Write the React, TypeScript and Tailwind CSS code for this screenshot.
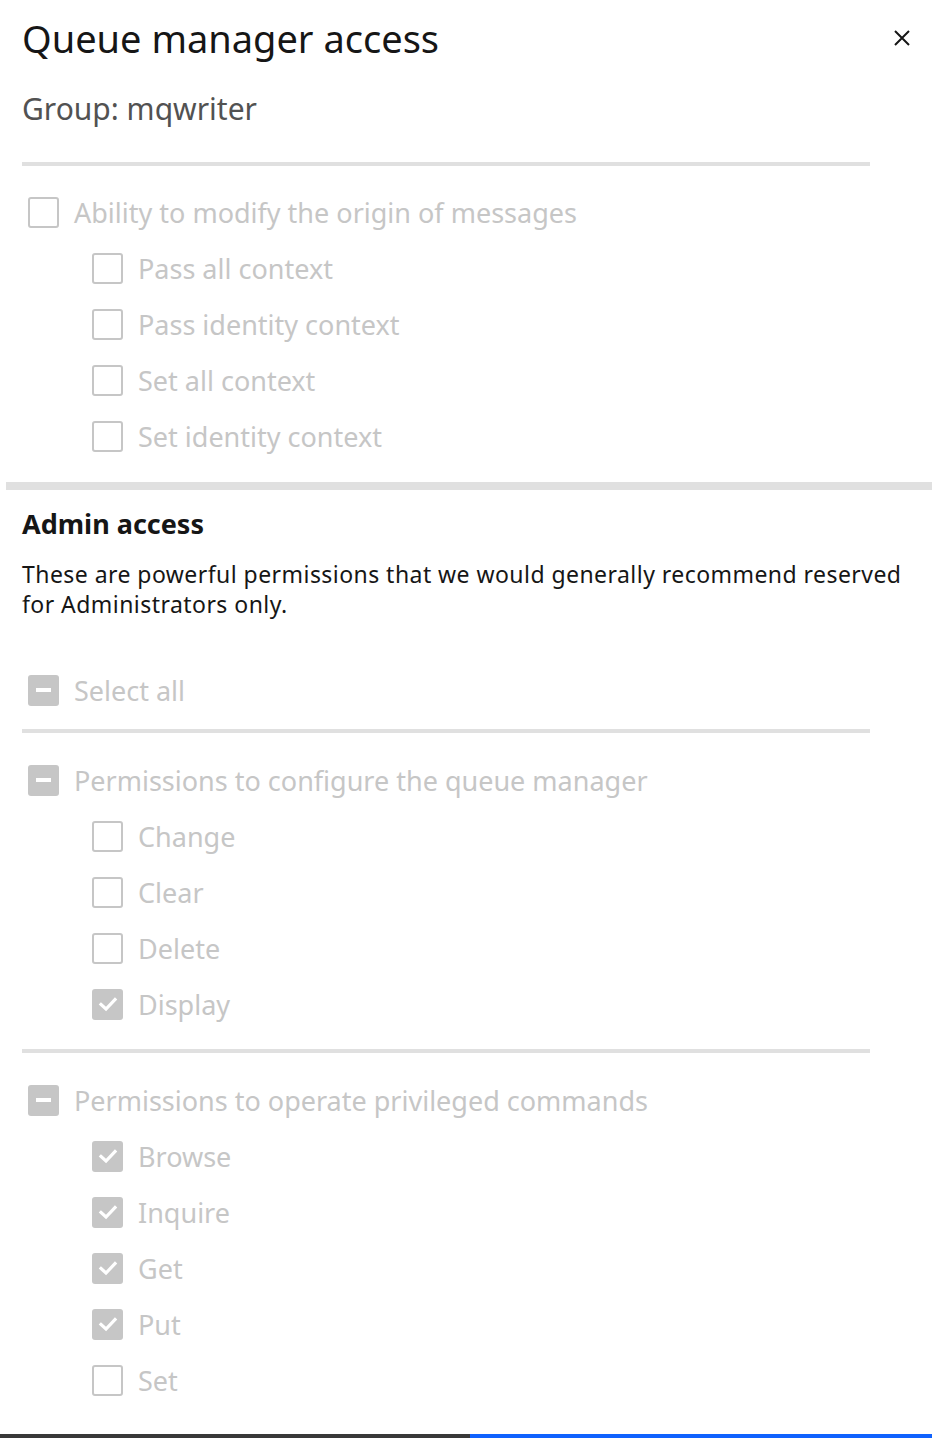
import React from "react";

type State = "off" | "on" | "mixed";

function Box({ state }: { state: State }) {
  if (state === "off") {
    return <div className="w-[31px] h-[31px] shrink-0 rounded-[3px] border-2 border-[#c6c6c6] bg-white" />;
  }
  return (
    <div className="w-[31px] h-[31px] shrink-0 rounded-[3px] bg-[#c6c6c6] flex items-center justify-center">
      {state === "on" ? (
        <svg width="24" height="24" viewBox="0 0 24 24" fill="none">
          <path d="M5 12.5 L10 17 L19 7.5" stroke="white" strokeWidth="3.2" strokeLinecap="square" />
        </svg>
      ) : (
        <div className="w-[15px] h-[4px] bg-white" />
      )}
    </div>
  );
}

function Row({ label, state, child }: { label: string; state: State; child?: boolean }) {
  return (
    <div className={`h-[56px] flex items-center gap-[15px] ${child ? "pl-[70px]" : "pl-[6px]"}`}>
      <Box state={state} />
      <span className="text-[27px] leading-none text-[#c6c6c6]">{label}</span>
    </div>
  );
}

function Divider() {
  return <div className="w-[848px] h-[4px] bg-[#e0e0e0]" />;
}

export default function App() {
  return (
    <div
      className="w-[932px] h-[1438px] bg-white relative flex flex-col overflow-hidden"
      style={{ fontFamily: '"Noto Sans", "Open Sans", Arial, sans-serif' }}
    >
      <button className="absolute left-[890px] top-[26px] w-[24px] h-[24px] flex items-center justify-center">
        <svg width="18" height="18" viewBox="0 0 18 18" fill="none">
          <path d="M2 2 L16 16 M16 2 L2 16" stroke="#161616" strokeWidth="2" />
        </svg>
      </button>

      <div className="pl-[22px] flex flex-col">
        <h1 className="pt-[14px] text-[38px] leading-[48px] text-[#161616] font-normal">Queue manager access</h1>
        <div className="mt-[27px] text-[30px] leading-[40px] text-[#525252]">Group: mqwriter</div>
        <div className="mt-[33px]">
          <Divider />
        </div>
        <div className="mt-[18px] flex flex-col">
          <Row label="Ability to modify the origin of messages" state="off" />
          <Row label="Pass all context" state="off" child />
          <Row label="Pass identity context" state="off" child />
          <Row label="Set all context" state="off" child />
          <Row label="Set identity context" state="off" child />
        </div>
      </div>

      <div className="ml-[6px] mt-[18px] h-[8px] bg-[#e0e0e0]" />

      <div className="pl-[22px] flex flex-col">
        <h2 className="mt-[18px] text-[27px] leading-[32px] font-bold text-[#161616]">Admin access</h2>
        <p className="mt-[19px] text-[23px] leading-[30px] text-[#161616] pr-[20px] tracking-[0.45px]">
          These are powerful permissions that we would generally recommend reserved for Administrators only.
        </p>
        <div className="mt-[43px]">
          <Row label="Select all" state="mixed" />
        </div>
        <div className="mt-[11px]">
          <Divider />
        </div>
        <div className="mt-[19px] flex flex-col">
          <Row label="Permissions to configure the queue manager" state="mixed" />
          <Row label="Change" state="off" child />
          <Row label="Clear" state="off" child />
          <Row label="Delete" state="off" child />
          <Row label="Display" state="on" child />
        </div>
        <div className="mt-[17px]">
          <Divider />
        </div>
        <div className="mt-[19px] flex flex-col">
          <Row label="Permissions to operate privileged commands" state="mixed" />
          <Row label="Browse" state="on" child />
          <Row label="Inquire" state="on" child />
          <Row label="Get" state="on" child />
          <Row label="Put" state="on" child />
          <Row label="Set" state="off" child />
        </div>
      </div>

      <div className="mt-auto h-[4px] flex">
        <div className="w-[470px] bg-[#393939]" />
        <div className="flex-1 bg-[#0f62fe]" />
      </div>
    </div>
  );
}
